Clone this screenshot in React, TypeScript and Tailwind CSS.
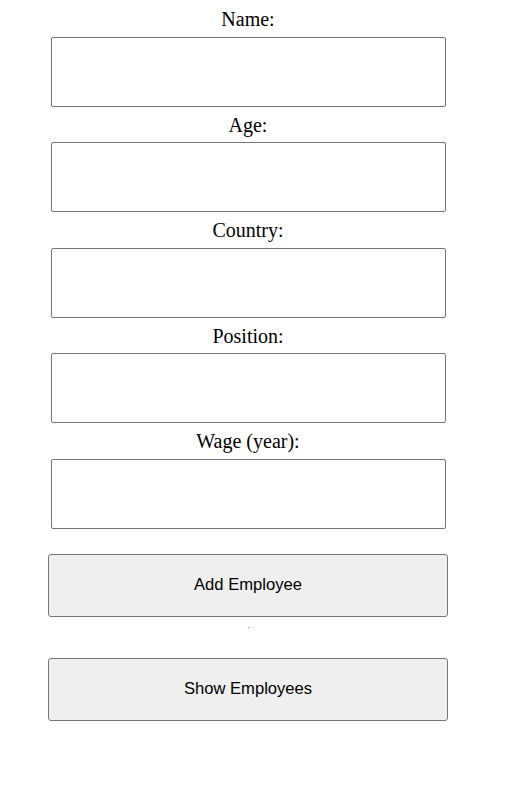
const fields = ["Name:", "Age:", "Country:", "Position:", "Wage (year):"];

export default function App() {
  return (
    <div className="w-[496px] min-h-[788px] bg-white flex flex-col items-center pt-px">
      {fields.map((label) => (
        <div key={label} className="flex flex-col items-center">
          <label className="mt-[7px] mb-[6px] text-[20px] leading-[22.5px] text-black font-['Liberation_Serif',serif]">
            {label}
          </label>
          <input
            type="text"
            className="w-[395px] h-[70px] border border-[#767676] rounded-[2px] bg-white outline-none"
          />
        </div>
      ))}
      <button className="mt-[25px] w-[400px] h-[63px] bg-[#efefef] border border-[#767676] rounded-[3px] text-[16.6px] text-black font-['Liberation_Sans',Arial,sans-serif]">
        Add Employee
      </button>
      <div className="mt-[10px] w-px h-px bg-[#999]" />
      <button className="mt-[30px] w-[400px] h-[63px] bg-[#efefef] border border-[#767676] rounded-[3px] text-[16.6px] text-black font-['Liberation_Sans',Arial,sans-serif]">
        Show Employees
      </button>
    </div>
  );
}
